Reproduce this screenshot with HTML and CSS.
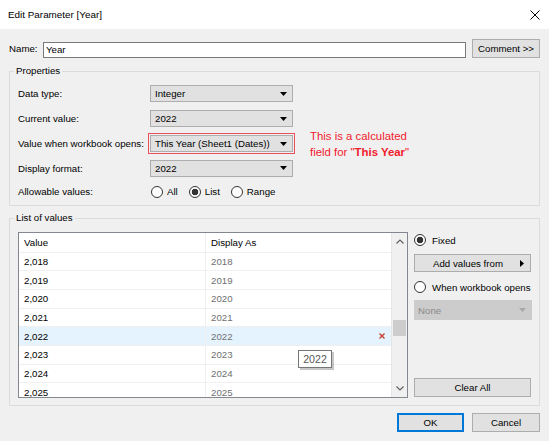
FILE: index.html
```html
<!DOCTYPE html>
<html>
<head>
<meta charset="utf-8">
<title>Edit Parameter [Year]</title>
<link rel="stylesheet" href="styles.css">
</head>
<body>
<div class="titlebar">
  <span class="title">Edit Parameter [Year]</span>
  <svg class="close" width="10" height="10" viewBox="0 0 10 10"><path d="M0.5 0.5 L9.5 9.5 M9.5 0.5 L0.5 9.5" stroke="#000" stroke-width="1" fill="none"/></svg>
</div>
<div class="dialog">
  <div class="name-row">
    <span class="name-label">Name:</span>
    <div class="text-input">Year</div>
    <button class="btn comment">Comment &gt;&gt;</button>
  </div>

  <fieldset class="group props">
    <legend>Properties</legend>
    <div class="prop-row">
      <span class="label">Data type:</span>
      <div class="select"><span>Integer</span><svg class="caret" width="7" height="4" viewBox="0 0 7 4"><polygon points="0,0 7,0 3.5,4" fill="#000"/></svg></div>
    </div>
    <div class="prop-row">
      <span class="label">Current value:</span>
      <div class="select"><span>2022</span><svg class="caret" width="7" height="4" viewBox="0 0 7 4"><polygon points="0,0 7,0 3.5,4" fill="#000"/></svg></div>
    </div>
    <div class="prop-row">
      <span class="label">Value when workbook opens:</span>
      <div class="highlight">
        <div class="select"><span>This Year (Sheet1 (Dates))</span><svg class="caret" width="7" height="4" viewBox="0 0 7 4"><polygon points="0,0 7,0 3.5,4" fill="#000"/></svg></div>
      </div>
      <div class="note">This is a calculated<br>field for "<b>This Year</b>"</div>
    </div>
    <div class="prop-row short">
      <span class="label">Display format:</span>
      <div class="select"><span>2022</span><svg class="caret" width="7" height="4" viewBox="0 0 7 4"><polygon points="0,0 7,0 3.5,4" fill="#000"/></svg></div>
    </div>
    <div class="prop-row radios-row">
      <span class="label">Allowable values:</span>
      <div class="radios">
        <label class="radio-item"><span class="radio"></span>All</label>
        <label class="radio-item"><span class="radio checked"></span>List</label>
        <label class="radio-item"><span class="radio"></span>Range</label>
      </div>
    </div>
  </fieldset>

  <fieldset class="group values">
    <legend>List of values</legend>
    <div class="values-body">
      <div class="table">
        <div class="list">
          <div class="row head"><div class="c1">Value</div><div class="c2">Display As</div></div>
          <div class="row"><div class="c1">2,018</div><div class="c2">2018</div></div>
          <div class="row"><div class="c1">2,019</div><div class="c2">2019</div></div>
          <div class="row"><div class="c1">2,020</div><div class="c2">2020</div></div>
          <div class="row"><div class="c1">2,021</div><div class="c2">2021</div></div>
          <div class="row selected"><div class="c1">2,022</div><div class="c2">2022<svg class="del" width="6" height="6" viewBox="0 0 6 6"><path d="M0.5 0.5 L5.5 5.5 M5.5 0.5 L0.5 5.5" stroke="#c4402f" stroke-width="1.4" fill="none"/></svg></div></div>
          <div class="row"><div class="c1">2,023</div><div class="c2">2023</div></div>
          <div class="row"><div class="c1">2,024</div><div class="c2">2024</div></div>
          <div class="row"><div class="c1">2,025</div><div class="c2">2025</div></div>
          <div class="tooltip">2022</div>
        </div>
        <div class="scrollbar">
          <div class="arrow"><svg width="8" height="5" viewBox="0 0 8 5"><polyline points="0.5,4.5 4,1 7.5,4.5" stroke="#606060" stroke-width="1.2" fill="none"/></svg></div>
          <div class="track"><div class="thumb"></div></div>
          <div class="arrow"><svg width="8" height="5" viewBox="0 0 8 5"><polyline points="0.5,0.5 4,4 7.5,0.5" stroke="#606060" stroke-width="1.2" fill="none"/></svg></div>
        </div>
      </div>
      <div class="side">
        <label class="radio-item side-radio"><span class="radio checked"></span>Fixed</label>
        <button class="btn add"><span>Add values from</span><svg class="tri" width="4" height="7" viewBox="0 0 4 7"><polygon points="0,0 4,3.5 0,7" fill="#000"/></svg></button>
        <label class="radio-item side-radio second"><span class="radio"></span>When workbook opens</label>
        <div class="select disabled"><span>None</span><svg class="caret" width="7" height="4" viewBox="0 0 7 4"><polygon points="0,0 7,0 3.5,4" fill="#a8a8a8"/></svg></div>
        <button class="btn clear">Clear All</button>
      </div>
    </div>
  </fieldset>

  <div class="footer">
    <button class="btn ok">OK</button>
    <button class="btn cancel">Cancel</button>
  </div>
</div>
</body>
</html>
```
FILE: styles.css
```css
* { box-sizing: border-box; }
html, body { margin: 0; padding: 0; }
body {
  width: 549px;
  height: 441px;
  overflow: hidden;
  background: #f0f0f0;
  font-family: "Liberation Sans", Arial, sans-serif;
  font-size: 9.7px;
  color: #000;
}
.titlebar {
  height: 29px;
  background: #fff;
  display: flex;
  align-items: center;
  justify-content: space-between;
  padding: 0 9px 0 8px;
}
.title { font-size: 9.9px; }
.close { display: block; }

.dialog { padding: 0 9px; }

.name-row {
  margin-top: 10px;
  height: 19px;
  display: flex;
  align-items: center;
}
.name-label { width: 34px; }
.text-input {
  flex: 1;
  height: 16px;
  border: 1px solid #7a7a7a;
  background: #fff;
  padding-left: 2px;
  line-height: 14px;
  margin-top: 3px;
}
.btn {
  font-family: inherit;
  font-size: 9.7px;
  color: #000;
  background: #e1e1e1;
  border: 1px solid #adadad;
  padding: 0;
  margin: 0;
}
.comment {
  width: 68px;
  height: 19px;
  margin-left: 6px;
}

.group {
  border: 1px solid #dcdcdc;
  margin: 0;
  padding: 0 0 0 8px;
  min-width: 0;
}
.group legend {
  padding: 0 2px;
  margin-left: -4px;
  line-height: 12px;
  height: 12px;
}
.props { margin-top: 7px; padding-top: 4px; padding-bottom: 2px; }

.prop-row {
  display: flex;
  align-items: center;
  height: 25px;
}
.prop-row.short { height: 24px; }
.prop-row.radios-row { height: 23px; }
.label { width: 132px; flex: none; }
.select {
  width: 143px;
  height: 17px;
  border: 1px solid #adadad;
  background: #e1e1e1;
  display: flex;
  align-items: center;
  justify-content: space-between;
  padding: 0 5px 0 4px;
  flex: none;
}
.caret { display: block; }
.highlight {
  border: 1px solid #e8505a;
  padding: 1px;
  margin-left: -2px;
  flex: none;
}
.note {
  margin-left: 15px;
  color: #f0202c;
  font-size: 11.4px;
  line-height: 16px;
  white-space: nowrap;
}
.note b { font-weight: bold; }

.radios { display: flex; align-items: center; margin-left: 1px; }
.radio-item { display: flex; align-items: center; }
.radios .radio-item { margin-right: 11px; }
.radio {
  width: 12px;
  height: 12px;
  border: 1px solid #333;
  border-radius: 50%;
  background: #fff;
  margin-right: 4px;
  flex: none;
}
.radio.checked {
  background: radial-gradient(circle, #333 0, #333 3px, #fff 3.6px);
}

.values { margin-top: 6px; padding-top: 8px; padding-bottom: 7px; padding-right: 9px; }
.values-body { display: flex; height: 166px; }
.table {
  width: 390px;
  height: 166px;
  border: 1px solid #828790;
  background: #fff;
  display: flex;
  flex: none;
}
.list {
  flex: 1;
  position: relative;
  overflow: hidden;
}
.row {
  display: flex;
  height: 18.7px;
  border-bottom: 1px solid #f0f0f0;
  align-items: center;
}
.row.head { height: 19.5px; }
.c1 {
  width: 187px;
  height: 100%;
  display: flex;
  align-items: center;
  padding-left: 5px;
  border-right: 1px solid #f0f0f0;
}
.c2 {
  flex: 1;
  height: 100%;
  display: flex;
  align-items: center;
  padding-left: 5px;
  color: #707070;
  justify-content: space-between;
  padding-right: 6px;
}
.head .c2 { color: #000; }
.row.selected { background: #e5f3ff; }
.del { display: block; }
.tooltip {
  position: absolute;
  left: 279px;
  top: 117px;
  width: 34px;
  height: 18px;
  border: 1px solid #767676;
  background: #fff;
  box-shadow: 2px 2px 0 rgba(0,0,0,0.22);
  color: #575757;
  font-size: 10.6px;
  line-height: 16px;
  text-align: center;
}
.scrollbar {
  width: 16px;
  flex: none;
  background: #f0f0f0;
  border-left: 1px solid #e6e6e6;
  display: flex;
  flex-direction: column;
}
.arrow {
  height: 17px;
  display: flex;
  align-items: center;
  justify-content: center;
}
.arrow svg { display: block; }
.track { flex: 1; }
.thumb {
  margin-top: 70px;
  margin-left: 1px;
  width: 13px;
  height: 16px;
  background: #cdcdcd;
}

.side {
  width: 117px;
  margin-left: 6px;
  display: flex;
  flex-direction: column;
}
.side-radio { height: 16px; }
.side-radio .radio { margin-right: 6px; }
.side-radio.second { margin-top: 7px; }
.add {
  margin-top: 6px;
  height: 18px;
  display: flex;
  align-items: center;
  justify-content: space-between;
  padding: 0 6px 0 18px;
}
.tri { display: block; }
.select.disabled {
  width: 118px;
  height: 20px;
  margin-top: 5px;
  background: #cccccc;
  border-color: #cccccc;
  color: #8a8a8a;
  padding: 0 5px 0 3px;
}
.clear {
  margin-top: auto;
  margin-bottom: 1px;
  height: 19px;
}

.footer {
  display: flex;
  justify-content: flex-end;
  margin-top: 7px;
}
.ok, .cancel { width: 67px; height: 19px; }
.ok { border-color: #0078d7; box-shadow: inset 0 0 0 1px #0078d7; }
.cancel { margin-left: 8px; width: 68px; }
```
